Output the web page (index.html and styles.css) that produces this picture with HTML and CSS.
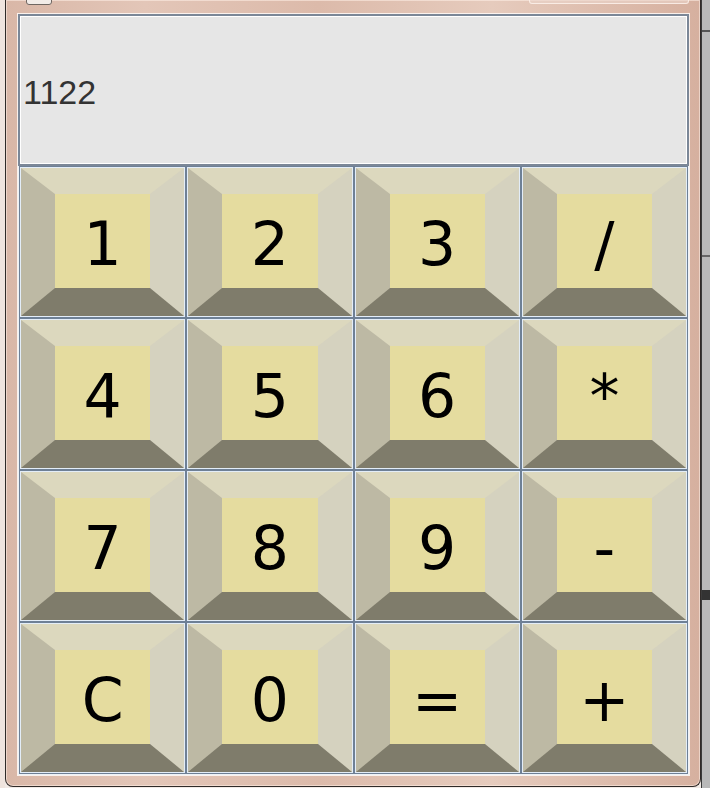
FILE: index.html
```html
<!DOCTYPE html>
<html>
<head>
<meta charset="utf-8">
<title>Calculator</title>
<link rel="stylesheet" href="styles.css">
</head>
<body>
<div class="screen">
  <div class="desk-left"></div>
  <div class="window">
    <div class="titlebar">
      <div class="app-icon"></div>
      <div class="caption-btns"></div>
    </div>
    <div class="content">
      <div class="display">1122</div>
      <div class="keys">
        <div class="key"><span class="bevel">1</span></div>
        <div class="key"><span class="bevel">2</span></div>
        <div class="key"><span class="bevel">3</span></div>
        <div class="key"><span class="bevel">/</span></div>
        <div class="key"><span class="bevel">4</span></div>
        <div class="key"><span class="bevel">5</span></div>
        <div class="key"><span class="bevel">6</span></div>
        <div class="key"><span class="bevel">*</span></div>
        <div class="key"><span class="bevel">7</span></div>
        <div class="key"><span class="bevel">8</span></div>
        <div class="key"><span class="bevel">9</span></div>
        <div class="key"><span class="bevel">-</span></div>
        <div class="key"><span class="bevel">C</span></div>
        <div class="key"><span class="bevel">0</span></div>
        <div class="key"><span class="bevel">=</span></div>
        <div class="key"><span class="bevel">+</span></div>
      </div>
    </div>
  </div>
  <div class="desk-right"></div>
</div>
</body>
</html>
```

FILE: styles.css
```css
html, body {
  margin: 0;
  padding: 0;
  background: #efe6e1;
}

.screen {
  width: 710px;
  height: 788px;
  display: flex;
  overflow: hidden;
  background: #f1eae6;
}

.desk-left {
  width: 5px;
  height: 788px;
  background: #efe4de;
}

.window {
  box-sizing: border-box;
  width: 696px;
  height: 787px;
  border: 1px solid #2f2a28;
  border-top: none;
  border-radius: 0 0 8px 8px;
  padding: 0 11px 11px 12px;
  background: linear-gradient(90deg, #d9b7a7 0%, #e3c6b8 20%, #dcbaaa 45%, #e6cbbd 70%, #d6b09f 100%);
  box-shadow: inset 0 0 0 1px rgba(255, 240, 232, 0.55);
  display: flex;
  flex-direction: column;
}

.titlebar {
  height: 14px;
  display: flex;
  align-items: flex-start;
}

.app-icon {
  width: 24px;
  height: 10px;
  margin-top: -7px;
  margin-left: 8px;
  border: 1px solid #6f6762;
  border-radius: 3px;
  background: #f2ece8;
}

.caption-btns {
  width: 158px;
  height: 8px;
  margin-top: -6px;
  margin-left: auto;
  margin-right: 0;
  border: 1px solid rgba(255, 245, 240, 0.75);
  border-radius: 0 0 3px 3px;
  background: rgba(235, 214, 203, 0.6);
}

.content {
  width: 671px;
  height: 761px;
  display: flex;
  flex-direction: column;
  background: #eef2f6;
  box-shadow: 0 0 0 1px rgba(255, 250, 248, 0.85);
}

.display {
  box-sizing: border-box;
  height: 152px;
  border: 2px solid #7b8797;
  box-shadow: inset 0 0 0 1px #ffffff;
  background: #e6e6e6;
  padding-left: 3px;
  display: flex;
  align-items: center;
  font-family: "Liberation Sans", Arial, sans-serif;
  font-size: 34px;
  color: #333333;
  padding-top: 4px;
}

.keys {
  flex: 1;
  display: grid;
  grid-template-columns: repeat(4, 1fr);
  grid-template-rows: repeat(4, 152px);
  padding: 0 1px 1px 1px;
}

.key {
  box-sizing: border-box;
  border: 1px solid #6e8096;
  padding: 1px;
  background: #e3edf8;
  display: flex;
  min-width: 0;
}

.bevel {
  flex: 1;
  border-style: solid;
  border-width: 26px 34px 28px 34px;
  border-color: #dcd8be #d5d2bf #7f7c6b #bdb9a4;
  background: #e5dc9f;
  display: flex;
  align-items: center;
  justify-content: center;
  padding-top: 6px;
  font-family: "DejaVu Sans", Verdana, sans-serif;
  font-size: 60px;
  line-height: 1;
  color: #000000;
}

.desk-right {
  flex: 1;
  height: 788px;
  background: #b9b9b9;
  border-left: 1px solid #3a3a3a;
  background-image: linear-gradient(180deg, transparent 0, transparent 30px, #555 30px, #555 32px, transparent 32px, transparent 255px, #666 255px, #666 257px, transparent 257px, transparent 590px, #333 590px, #333 600px, transparent 600px);
}
```
